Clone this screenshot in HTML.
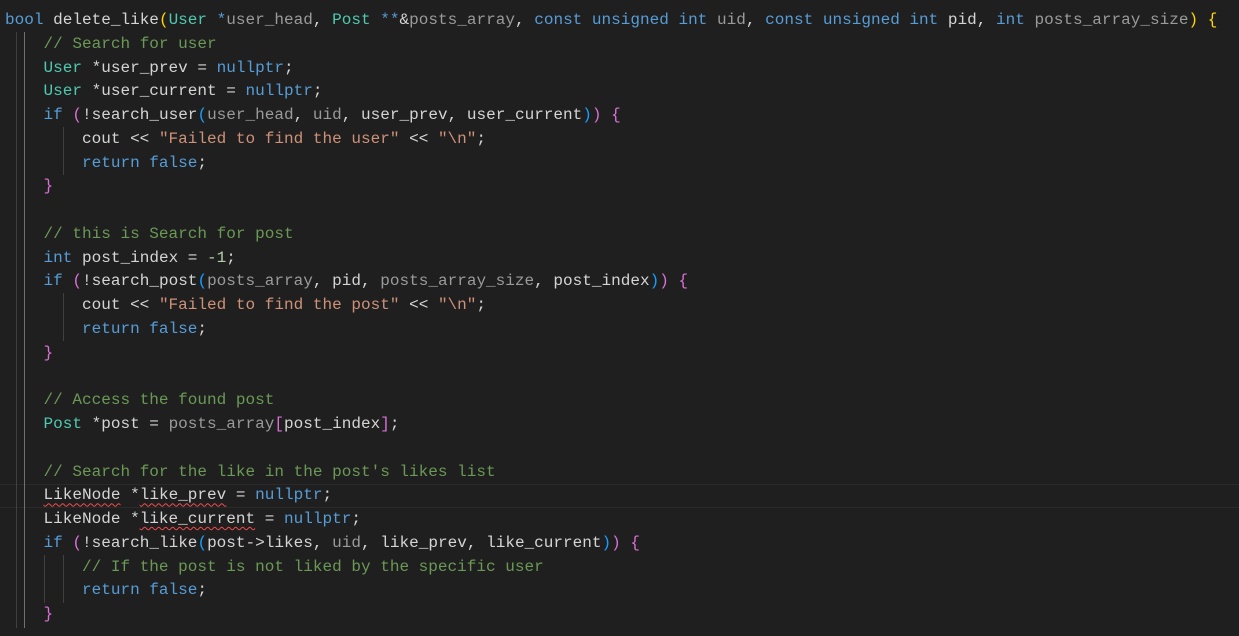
<!DOCTYPE html>
<html><head><meta charset="utf-8"><style>
body{margin:0;background:#1f1f1f;width:1239px;height:636px;overflow:hidden;position:relative}
pre{margin:0;position:absolute;left:5px;top:9px;font-family:"Liberation Mono",monospace;font-size:16.05px;line-height:23.76px;color:#d4d4d4;letter-spacing:0}
.k{color:#569cd6}.t{color:#4ec9b0}.c{color:#6a9955}.s{color:#ce9178}.p{color:#9a9a9a}.n{color:#b5cea8}
.g{color:#ffd700}.m{color:#da70d6}.b{color:#179fff}
.sq{text-decoration:underline wavy #f14c4c;text-decoration-thickness:1px;text-underline-offset:3px}
.gl{position:absolute;width:1px}
.cur{position:absolute;left:0;right:0;top:484px;height:22px;border-top:1px solid #2a2a2a;border-bottom:1px solid #2a2a2a}
</style></head><body>
<div class="cur"></div>
<div class="gl" style="left:16px;top:32px;height:596px;background:#404040"></div>
<div class="gl" style="left:24px;top:32px;height:596px;background:#707070"></div>
<div class="gl" style="left:63px;top:127px;height:48px;background:#404040"></div>
<div class="gl" style="left:63px;top:293px;height:48px;background:#404040"></div>
<div class="gl" style="left:44px;top:555px;height:48px;background:#404040"></div>
<div class="gl" style="left:63px;top:555px;height:48px;background:#404040"></div>
<pre><span class="k">bool</span> delete_like<span class="g">(</span><span class="t">User</span> <span class="k">*</span><span class="p">user_head</span>, <span class="t">Post</span> <span class="k">**</span>&amp;<span class="p">posts_array</span>, <span class="k">const unsigned int</span> <span class="p">uid</span>, <span class="k">const unsigned int</span> pid, <span class="k">int</span> <span class="p">posts_array_size</span><span class="g">)</span> <span class="g">{</span>
    <span class="c">// Search for user</span>
    <span class="t">User</span> *user_prev = <span class="k">nullptr</span>;
    <span class="t">User</span> *user_current = <span class="k">nullptr</span>;
    <span class="k">if</span> <span class="m">(</span>!search_user<span class="b">(</span><span class="p">user_head</span>, <span class="p">uid</span>, user_prev, user_current<span class="b">)</span><span class="m">)</span> <span class="m">{</span>
        cout &lt;&lt; <span class="s">"Failed to find the user"</span> &lt;&lt; <span class="s">"\n"</span>;
        <span class="k">return false</span>;
    <span class="m">}</span>

    <span class="c">// this is Search for post</span>
    <span class="k">int</span> post_index = <span class="n">-1</span>;
    <span class="k">if</span> <span class="m">(</span>!search_post<span class="b">(</span><span class="p">posts_array</span>, pid, <span class="p">posts_array_size</span>, post_index<span class="b">)</span><span class="m">)</span> <span class="m">{</span>
        cout &lt;&lt; <span class="s">"Failed to find the post"</span> &lt;&lt; <span class="s">"\n"</span>;
        <span class="k">return false</span>;
    <span class="m">}</span>

    <span class="c">// Access the found post</span>
    <span class="t">Post</span> *post = <span class="p">posts_array</span><span class="m">[</span>post_index<span class="m">]</span>;

    <span class="c">// Search for the like in the post's likes list</span>
    <span class="sq">LikeNode</span> *<span class="sq">like_prev</span> = <span class="k">nullptr</span>;
    LikeNode *<span class="sq">like_current</span> = <span class="k">nullptr</span>;
    <span class="k">if</span> <span class="m">(</span>!search_like<span class="b">(</span>post-&gt;likes, <span class="p">uid</span>, like_prev, like_current<span class="b">)</span><span class="m">)</span> <span class="m">{</span>
        <span class="c">// If the post is not liked by the specific user</span>
        <span class="k">return false</span>;
    <span class="m">}</span>
</pre>
</body></html>
